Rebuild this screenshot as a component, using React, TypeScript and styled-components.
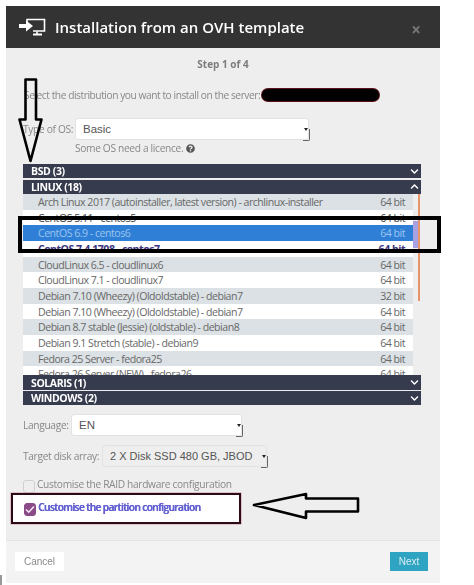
import React from "react";
import styled, { createGlobalStyle } from "styled-components";
import { FaChevronDown, FaChevronUp, FaQuestionCircle } from "react-icons/fa";

const Global = createGlobalStyle`
  html, body { margin: 0; padding: 0; background: #fff; }
  body { font-family: "Open Sans", "Liberation Sans", sans-serif; }
`;

const Page = styled.div`
  position: relative;
  width: 474px;
  height: 585px;
  overflow: hidden;
  padding: 6px 0 0 6px;
  box-sizing: border-box;
  filter: blur(0.4px);
`;

const Modal = styled.div`
  width: 434px;
  display: flex;
  flex-direction: column;
`;

const Header = styled.header`
  height: 42px;
  background: #333333;
  display: flex;
  align-items: center;
  padding: 0 19px 0 13px;
  color: #fff;
  box-shadow: 0 1px 0 #cfcfcf;
`;

const Title = styled.h1`
  margin: 0 0 1px 8px;
  flex: 1;
  font-size: 15px;
  font-weight: 600;
  white-space: nowrap;
`;

const Close = styled.span`
  color: #777;
  font-size: 17px;
  font-weight: 700;
  line-height: 1;
  margin-top: 5px;
`;

const Body = styled.div`
  height: 492px;
  box-sizing: border-box;
  background: #eeeeee;
  padding: 8px 19px 0 17px;
  display: flex;
  flex-direction: column;
  color: #888888;
  font-size: 10.2px;
  letter-spacing: -0.33px;
`;

const Step = styled.div`
  height: 16px;
  line-height: 16px;
  text-align: center;
  font-weight: 700;
  font-size: 10px;
  letter-spacing: 0;
  color: #7c7c7c;
  margin-right: -2px;
`;

const Intro = styled.div`
  margin-top: 15px;
  height: 16px;
  line-height: 16px;
  display: flex;
  align-items: center;
  padding-left: 1px;
  white-space: nowrap;
  letter-spacing: -0.44px;
`;

const Redacted = styled.span`
  display: inline-block;
  width: 117px;
  height: 12px;
  margin-left: 2px;
  border-radius: 7px;
  background: #000;
  box-shadow: 0 0 0 1px #5a1018;
`;

const FieldRow = styled.div<{ $top: number }>`
  margin-top: ${(p) => p.$top}px;
  display: flex;
  align-items: center;
  white-space: nowrap;
`;

const FieldLabel = styled.span<{ $width: number }>`
  width: ${(p) => p.$width}px;
  flex: none;
`;

const Select = styled.div<{ $width: number; $muted?: boolean }>`
  position: relative;
  box-sizing: border-box;
  width: ${(p) => p.$width}px;
  height: 22px;
  line-height: 20px;
  padding-left: 7px;
  border: 1px solid #e2e2e2;
  border-radius: 3px;
  background: ${(p) => (p.$muted ? "#eeeeee" : "#ffffff")};
  font-family: "Liberation Sans", Arial, sans-serif;
  font-size: ${(p) => (p.$muted ? "11px" : "11.5px")};
  letter-spacing: 0;
  color: #555;
  &::before {
    content: "";
    position: absolute;
    right: -1.5px;
    bottom: -1.5px;
    width: 6px;
    height: 11px;
    border-right: 1.5px solid #666;
    border-bottom: 1.5px solid #666;
    border-bottom-right-radius: 2px;
  }
  &::after {
    content: "";
    position: absolute;
    right: 0;
    top: 9px;
    border-left: 2.5px solid transparent;
    border-right: 2.5px solid transparent;
    border-top: 3px solid #222;
  }
`;

const Hint = styled.div`
  height: 14px;
  line-height: 14px;
  margin-top: 1px;
  padding-left: 52px;
  display: flex;
  align-items: center;
  gap: 3px;
  svg {
    color: #555;
    font-size: 9px;
  }
`;

const Accordion = styled.div`
  position: relative;
  z-index: 1;
  margin-top: 9px;
  width: 398px;
`;

const Bar = styled.div<{ $gap?: number; $height?: number }>`
  height: ${(p) => p.$height ?? 14}px;
  margin-top: ${(p) => p.$gap ?? 0}px;
  background: #363b4e;
  color: #fff;
  display: flex;
  align-items: center;
  justify-content: space-between;
  padding: 0 2px 0 8px;
  font-size: 10.5px;
  font-weight: 700;
  letter-spacing: -0.4px;
  svg {
    font-size: 9px;
  }
`;

const ListFrame = styled.div`
  position: relative;
  height: 181px;
  overflow: hidden;
`;

const Rows = styled.div`
  width: 390px;
`;

const Row = styled.div<{ $tone: "grey" | "white" | "blue"; $dark?: boolean; $violet?: boolean }>`
  height: 15.67px;
  line-height: 16.5px;
  display: flex;
  justify-content: space-between;
  padding: 0 8px 0 15px;
  font-size: 10.6px;
  letter-spacing: -0.5px;
  white-space: nowrap;
  background: ${(p) =>
    p.$tone === "grey" ? "#dbe1e4" : p.$tone === "blue" ? "#2f7fd6" : "#ffffff"};
  color: ${(p) => (p.$tone === "blue" ? "#9cc4ee" : p.$violet ? "#3d3580" : p.$dark ? "#444" : "#686868")};
  font-weight: ${(p) => (p.$violet ? 700 : 400)};
`;

const ScrollLine = styled.div`
  position: absolute;
  left: 395px;
  top: 0;
  width: 2px;
  height: 107px;
  background: #e8946a;
`;

const ScrollTint = styled.div`
  position: absolute;
  left: 390px;
  top: 27px;
  width: 6px;
  height: 27px;
  background: #a9a2e2;
`;

const CheckLine = styled.label<{ $top: number }>`
  margin-top: ${(p) => p.$top}px;
  display: flex;
  align-items: flex-start;
  gap: 2px;
  white-space: nowrap;
`;

const CheckHighlight = styled.div`
  margin: 0 0 0 -12px;
  box-sizing: border-box;
  width: 230px;
  height: 31px;
  padding: 8px 0 0 11px;
  background: #fff;
  border: 2px solid #2c0a18;
  box-shadow: 0 0 0 0.5px #c99;
  display: flex;
  align-items: flex-start;
  gap: 2px;
  white-space: nowrap;
  color: #6260d0;
  font-weight: 600;
  letter-spacing: -0.62px;
  text-shadow: 0.5px 0 0 #6260d0;
`;

const CheckBox = styled.span<{ $checked?: boolean }>`
  box-sizing: border-box;
  flex: none;
  width: 12px;
  height: 13px;
  margin-top: ${(p) => (p.$checked ? "0" : "1px")};
  border-radius: 3px;
  border: 1px solid ${(p) => (p.$checked ? "#8a4a87" : "#d0d0d0")};
  background: ${(p) => (p.$checked ? "#8a4a87" : "#eeeeee")};
  display: flex;
  align-items: center;
  justify-content: center;
`;

const CheckLabel = styled.span`
  line-height: 11px;
`;

const HighlightedLabel = styled.span`
  line-height: 11px;
  margin-top: -1px;
`;

const Footer = styled.footer`
  height: 43px;
  box-sizing: border-box;
  background: #f3f3f3;
  border-top: 1px solid #e4e4e4;
  display: flex;
  align-items: center;
  justify-content: space-between;
  padding: 0 12px 2px 9px;
  font-family: "Liberation Sans", Arial, sans-serif;
  font-size: 10px;
`;

const CancelButton = styled.button`
  width: 49px;
  height: 19px;
  border: 0;
  padding: 0;
  background: #fff;
  color: #8a8a8a;
  font: inherit;
`;

const NextButton = styled.button`
  width: 38px;
  height: 19px;
  border: 0;
  padding: 0;
  background: #2fa3c2;
  color: #d9eef4;
  font: inherit;
`;

const HighlightFill = styled.div`
  position: absolute;
  left: 18px;
  top: 216px;
  width: 423px;
  height: 37px;
  background: #fff;
`;

const HighlightFrame = styled.div`
  position: absolute;
  z-index: 2;
  left: 18px;
  top: 216px;
  width: 423px;
  height: 37px;
  box-sizing: border-box;
  border: 4px solid #000;
`;

const Overlay = styled.svg`
  position: absolute;
  z-index: 3;
  left: 0;
  top: 0;
  pointer-events: none;
`;

const EdgeMark = styled.div`
  position: absolute;
  left: 0;
  bottom: 0;
  width: 2px;
  height: 10px;
  background: #999;
`;

const ModalLayer = styled.div`
  position: relative;
`;

const BackLayer = styled.div`
  position: absolute;
  inset: 0;
`;

const linux: { name: string; bit: string; tone: "grey" | "white" | "blue"; dark?: boolean; violet?: boolean }[] = [
  { name: "Arch Linux 2017 (autoinstaller, latest version) - archlinux-installer", bit: "64 bit", tone: "grey" },
  { name: "CentOS 5.11 - centos5", bit: "64 bit", tone: "white", dark: true },
  { name: "CentOS 6.9 - centos6", bit: "64 bit", tone: "blue" },
  { name: "CentOS 7.4.1708 - centos7", bit: "64 bit", tone: "white", violet: true },
  { name: "CloudLinux 6.5 - cloudlinux6", bit: "64 bit", tone: "grey" },
  { name: "CloudLinux 7.1 - cloudlinux7", bit: "64 bit", tone: "white" },
  { name: "Debian 7.10 (Wheezy) (Oldoldstable) - debian7", bit: "32 bit", tone: "grey" },
  { name: "Debian 7.10 (Wheezy) (Oldoldstable) - debian7", bit: "64 bit", tone: "white" },
  { name: "Debian 8.7 stable (Jessie) (oldstable) - debian8", bit: "64 bit", tone: "grey" },
  { name: "Debian 9.1 Stretch (stable) - debian9", bit: "64 bit", tone: "white" },
  { name: "Fedora 25 Server - fedora25", bit: "64 bit", tone: "grey" },
  { name: "Fedora 26 Server (NEW) - fedora26", bit: "64 bit", tone: "white" },
];

const HeaderIcon = () => (
  <svg width="28" height="20" viewBox="0 0 28 20" fill="none">
    <path d="M8 5V2.5h17.5v11.5H14" stroke="#fff" strokeWidth="1.6" />
    <path d="M14 17.5h9" stroke="#fff" strokeWidth="2" />
    <path d="M18 14.5v3" stroke="#fff" strokeWidth="1.6" />
    <path d="M0 7h7V3.5L14 9l-7 5.5V11H0z" fill="#fff" />
  </svg>
);

const CheckMark = () => (
  <svg width="10" height="9" viewBox="0 0 10 9" fill="none">
    <path d="M1 4.5l2.7 2.7L9 1.5" stroke="#f4e6f2" strokeWidth="1.6" />
  </svg>
);

export default function App() {
  return (
    <Page>
      <Global />
      <BackLayer>
        <HighlightFill />
      </BackLayer>
      <ModalLayer>
        <Modal>
          <Header>
            <HeaderIcon />
            <Title>Installation from an OVH template</Title>
            <Close>×</Close>
          </Header>
          <Body>
            <Step>Step 1 of 4</Step>
            <Intro>
              Select the distribution you want to install on the server:
              <Redacted />
            </Intro>
            <FieldRow $top={15}>
              <FieldLabel $width={52}>Type of OS:</FieldLabel>
              <Select $width={234}>Basic</Select>
            </FieldRow>
            <Hint>
              Some OS need a licence. <FaQuestionCircle />
            </Hint>
            <Accordion>
              <Bar>
                BSD (3) <FaChevronDown />
              </Bar>
              <Bar $gap={1.5} $height={14.5}>
                LINUX (18) <FaChevronUp />
              </Bar>
              <ListFrame>
                <Rows>
                  {linux.map((r, i) => (
                    <Row key={i} $tone={r.tone} $dark={r.dark} $violet={r.violet}>
                      <span>{r.name}</span>
                      <span>{r.bit}</span>
                    </Row>
                  ))}
                </Rows>
                <ScrollTint />
                <ScrollLine />
              </ListFrame>
              <Bar $height={15}>
                SOLARIS (1) <FaChevronDown />
              </Bar>
              <Bar $gap={1}>
                WINDOWS (2) <FaChevronDown />
              </Bar>
            </Accordion>
            <FieldRow $top={9}>
              <FieldLabel $width={48}>Language:</FieldLabel>
              <Select $width={171}>EN</Select>
            </FieldRow>
            <FieldRow $top={9}>
              <FieldLabel $width={79}>Target disk array:</FieldLabel>
              <Select $width={165} $muted>
                2 X Disk SSD 480 GB, JBOD
              </Select>
            </FieldRow>
            <CheckLine $top={12}>
              <CheckBox />
              <CheckLabel>Customise the RAID hardware configuration</CheckLabel>
            </CheckLine>
            <CheckHighlight>
              <CheckBox $checked>
                <CheckMark />
              </CheckBox>
              <HighlightedLabel>Customise the partition configuration</HighlightedLabel>
            </CheckHighlight>
          </Body>
          <Footer>
            <CancelButton>Cancel</CancelButton>
            <NextButton>Next</NextButton>
          </Footer>
        </Modal>
      </ModalLayer>
      <HighlightFrame />
      <Overlay width="474" height="585" viewBox="0 0 474 585" fill="none">
        <path
          d="M25.5 79.5H36V119.5H41.5L30.5 161L19.5 119.5H25.5Z"
          stroke="#000"
          strokeWidth="2.6"
          strokeLinejoin="round"
        />
        <path
          d="M358 498.5V511.5H306V518L254 505L306 494V498.5Z"
          stroke="#000"
          strokeWidth="2.6"
          strokeLinejoin="round"
        />
      </Overlay>
      <EdgeMark />
    </Page>
  );
}
